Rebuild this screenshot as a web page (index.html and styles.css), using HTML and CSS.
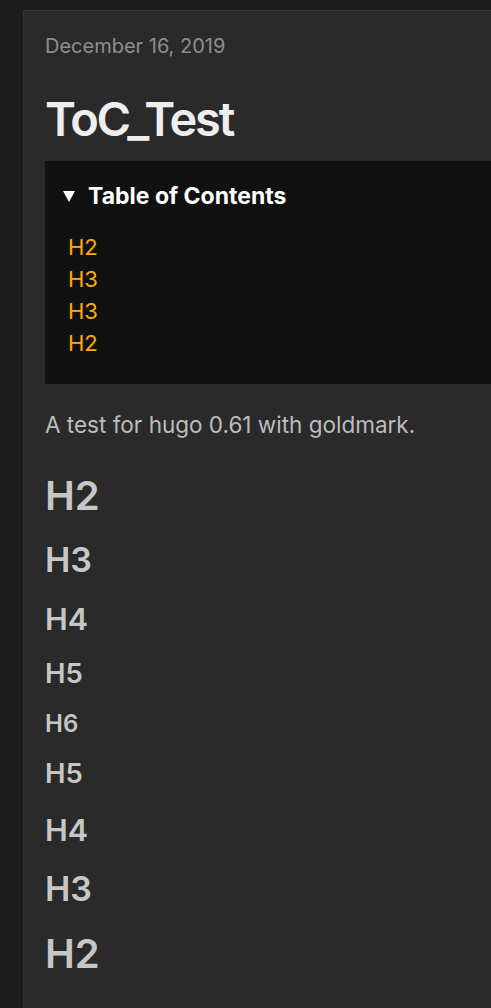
FILE: index.html
```html
<!DOCTYPE html>
<html lang="en">
<head>
    <meta charset="UTF-8">
    <title>ToC_Test</title>
    <link rel="stylesheet" href="styles.css">
</head>
<body>
    <article class="post">
        <div class="post-date">December 16, 2019</div>
        <h1 class="post-title">ToC_Test</h1>

        <details class="toc" open>
            <summary><span class="toc-arrow"></span>Table of Contents</summary>
            <ul class="toc-list">
                <li><a href="#h2">H2</a></li>
                <li><a href="#h3">H3</a></li>
                <li><a href="#h3-1">H3</a></li>
                <li><a href="#h2-1">H2</a></li>
            </ul>
        </details>

        <p>A test for hugo 0.61 with goldmark.</p>

        <h2 id="h2">H2</h2>
        <h3 id="h3">H3</h3>
        <h4>H4</h4>
        <h5>H5</h5>
        <h6>H6</h6>
        <h5>H5</h5>
        <h4>H4</h4>
        <h3 id="h3-1">H3</h3>
        <h2 id="h2-1">H2</h2>
    </article>
</body>
</html>
```

FILE: styles.css
```css
:root {
    --background: #1c1c1c;
    --card-bg: #2a2a2a;
    --toc-bg: #111111;
    --accent: #ffab00;
}

html, body {
    overflow: hidden;
}

body {
    background: var(--background);
    margin: 0;
    padding: 10px 0 0 23px;
    font-family: Inter, 'Noto Sans', sans-serif;
    color: #c0c0c0;
}

.post {
    width: 600px;
    min-height: 1100px;
    background: var(--card-bg);
    border: 1px solid #333333;
    border-right: none;
    padding: 23px 0 0 21px;
}

.post-date {
    font-size: 20px;
    line-height: 24px;
    color: #8e8e8e;
}

.post-title {
    margin: 33px 0 0 0;
    font-size: 47px;
    line-height: 56px;
    font-weight: 600;
    letter-spacing: -2.2px;
    color: #eeeeee;
}

.toc {
    margin-top: 14px;
    background: var(--toc-bg);
    padding: 21px 0 25px 18px;
}

.toc summary {
    list-style: none;
    display: flex;
    align-items: center;
    gap: 13px;
    font-size: 23px;
    line-height: 28px;
    font-weight: 700;
    color: #ffffff;
    cursor: pointer;
}

.toc summary::-webkit-details-marker {
    display: none;
}

.toc-arrow {
    width: 0;
    height: 0;
    border-left: 6.5px solid transparent;
    border-right: 6.5px solid transparent;
    border-top: 11.5px solid #ffffff;
}

.toc-list {
    list-style: none;
    margin: 21px 0 0 0;
    padding: 0 0 0 5px;
}

.toc-list li {
    font-size: 22px;
    line-height: 32px;
}

.toc-list a {
    color: var(--accent);
    text-decoration: none;
}

p {
    margin: 27px 0 33px 0;
    font-size: 22.5px;
    line-height: 28px;
    color: #bdbdbd;
}

h2, h3, h4, h5, h6 {
    margin: 20px 0 0 0;
    line-height: 1.2;
    font-weight: 600;
    color: #c6c6c6;
}

h2 { font-size: 40px; }
h3 { font-size: 34px; }
h4 { font-size: 30.5px; }
h5 { font-size: 27.5px; }
h6 { font-size: 24px; }
h6 + h5 { margin-top: 18px; }
h5 + h4 { margin-top: 22px; }
```
